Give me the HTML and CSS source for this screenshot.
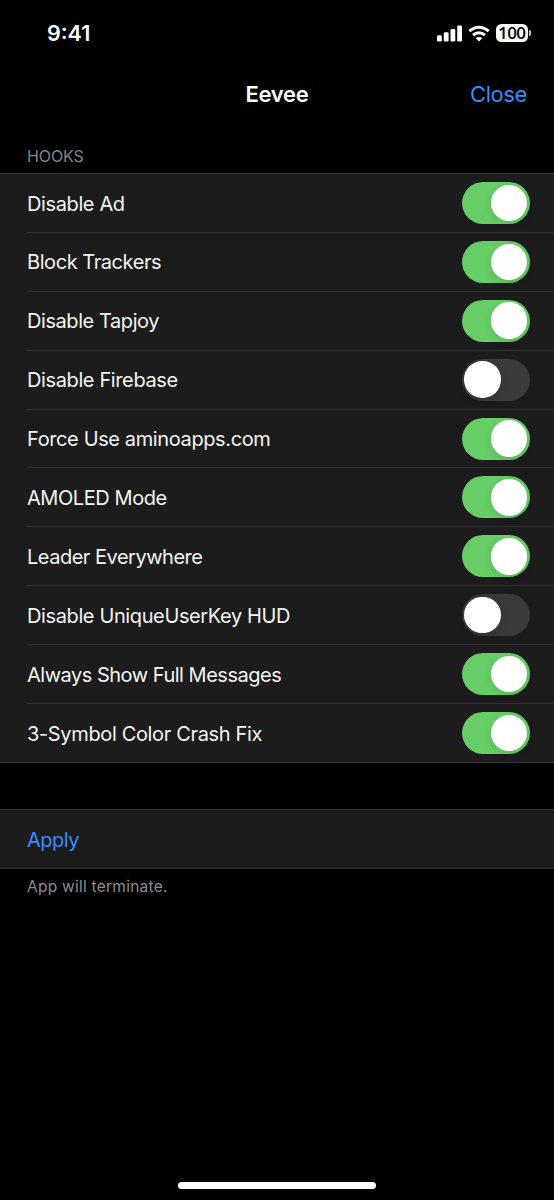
FILE: index.html
```html
<!DOCTYPE html>
<html lang="en">
<head>
<meta charset="utf-8">
<title>Eevee</title>
<link rel="stylesheet" href="styles.css">
</head>
<body>
<div class="screen">
  <header class="status">
    <span class="time">9:41</span>
    <div class="indicators">
      <svg class="signal" width="26" height="17" viewBox="0 0 26 17" fill="#fff"><rect x="0" y="10.3" width="4.8" height="6.2" rx="1.3"/><rect x="6.8" y="7.3" width="4.8" height="9.2" rx="1.3"/><rect x="13.5" y="4" width="4.8" height="12.5" rx="1.3"/><rect x="20.2" y="0.5" width="4.8" height="16" rx="1.3"/></svg>
      <svg class="wifi" width="22" height="17" viewBox="0 0 22 17" fill="none" stroke="#fff" stroke-width="3"><path d="M1.4 6.3C6.9.8 15.1.8 20.6 6.3"/><path d="M5.1 10.2C8.5 7 13.5 7 16.9 10.2"/><path d="M11 16.4 7.8 13.2C9.6 11.6 12.4 11.6 14.2 13.2Z" fill="#fff" stroke="none"/></svg>
      <div class="battery"><span class="charge">100</span></div>
      <span class="terminal"></span>
    </div>
  </header>
  <nav class="navbar">
    <h1 class="title">Eevee</h1>
    <a class="close">Close</a>
  </nav>
  <h2 class="section">HOOKS</h2>
  <ul class="group">
    <li class="row"><span class="label">Disable Ad</span><span class="switch on"></span></li>
    <li class="row"><span class="label tight">Block Trackers</span><span class="switch on"></span></li>
    <li class="row"><span class="label tight">Disable Tapjoy</span><span class="switch on"></span></li>
    <li class="row"><span class="label">Disable Firebase</span><span class="switch"></span></li>
    <li class="row"><span class="label">Force Use aminoapps.com</span><span class="switch on"></span></li>
    <li class="row"><span class="label tight">AMOLED Mode</span><span class="switch on"></span></li>
    <li class="row"><span class="label tighter">Leader Everywhere</span><span class="switch on"></span></li>
    <li class="row"><span class="label">Disable UniqueUserKey HUD</span><span class="switch"></span></li>
    <li class="row"><span class="label tighter">Always Show Full Messages</span><span class="switch on"></span></li>
    <li class="row"><span class="label loose">3-Symbol Color Crash Fix</span><span class="switch on"></span></li>
  </ul>
  <div class="apply"><a class="action">Apply</a></div>
  <p class="note">App will terminate.</p>
  <div class="home"></div>
</div>
</body>
</html>
```

FILE: styles.css
```css
* { box-sizing: border-box; }
body { margin: 0; background: #000; color: #f5f5f5; font-family: Inter, "Liberation Sans", sans-serif; }
.screen { width: 554px; height: 1200px; display: flex; flex-direction: column; overflow: hidden; }
.status { height: 66px; flex: none; display: flex; justify-content: space-between; align-items: center; padding: 0 23px 0 47px; color: #fff; }
.time { font-size: 21.5px; font-weight: 600; letter-spacing: 0; }
.indicators { display: flex; align-items: center; }
.wifi { margin: 0 6px 0 5px; }
.battery { width: 32.5px; height: 18.5px; border-radius: 5.5px; background: #fff; color: #000; display: flex; align-items: center; justify-content: center; }
.charge { font-family: "Open Sans", sans-serif; font-size: 17px; font-weight: 600; line-height: 18px; letter-spacing: -0.5px; }
.terminal { width: 2px; height: 6px; margin-left: 1px; border-radius: 0 3px 3px 0; background: #ccc; }
.navbar { height: 56px; flex: none; display: grid; grid-template-columns: 1fr auto 1fr; align-items: center; padding: 0 27px; }
.title { grid-column: 2; margin: 0; font-size: 22px; font-weight: 600; letter-spacing: -0.3px; color: #fff; }
.close { justify-self: end; font-size: 22px; letter-spacing: -0.4px; color: #3b8aff; }
.section { margin: 0; height: 51px; flex: none; padding: 24px 27px 0; font-size: 16px; line-height: 20px; letter-spacing: -0.1px; font-weight: 400; color: #858589; }
.group { list-style: none; margin: 0; padding: 0; height: 590px; flex: none; background: #1c1c1c; border-top: 1px solid #303032; border-bottom: 1px solid #303032; display: flex; flex-direction: column; }
.row { flex: none; height: 58.9px; margin-left: 27px; padding-right: 24px; display: flex; align-items: center; justify-content: space-between; border-bottom: 1px solid #303032; }
.row:last-child { border-bottom-color: transparent; }
.label { font-size: 20px; line-height: 26px; padding-top: 1.2px; white-space: nowrap; letter-spacing: -0.38px; }
.tight { letter-spacing: -0.43px; }
.tighter { letter-spacing: -0.49px; }
.loose { letter-spacing: -0.35px; }
.switch { width: 68.5px; height: 42px; border-radius: 21px; background: #3a3a3c; padding: 2.7px; display: flex; }
.switch::before { content: ""; width: 36.6px; height: 36.6px; border-radius: 50%; background: #fff; box-shadow: 0 3px 8px rgba(0,0,0,.12); }
.switch.on { background: #67ce67; justify-content: flex-end; }
.apply { height: 60px; flex: none; margin-top: 46px; padding-left: 27px; display: flex; align-items: center; background: #1c1c1c; border-top: 1px solid #303032; border-bottom: 1px solid #303032; }
.action { font-size: 20px; letter-spacing: -0.5px; padding-top: 1.4px; color: #3b8aff; }
.note { margin: 8px 27px 0; font-size: 15.5px; line-height: 20px; letter-spacing: 0.25px; color: #8d8d92; }
.home { width: 198px; height: 7px; border-radius: 4px; background: #fff; margin: auto auto 11px; }
```
